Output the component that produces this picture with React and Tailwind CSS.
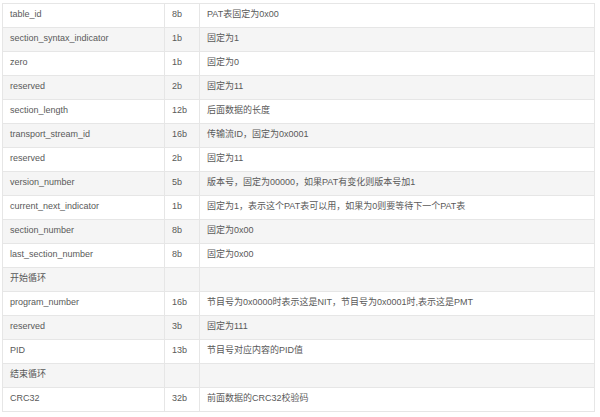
import React from "react";

const rows = [
  ["table_id", "8b", "PAT表固定为0x00"],
  ["section_syntax_indicator", "1b", "固定为1"],
  ["zero", "1b", "固定为0"],
  ["reserved", "2b", "固定为11"],
  ["section_length", "12b", "后面数据的长度"],
  ["transport_stream_id", "16b", "传输流ID，固定为0x0001"],
  ["reserved", "2b", "固定为11"],
  ["version_number", "5b", "版本号，固定为00000，如果PAT有变化则版本号加1"],
  ["current_next_indicator", "1b", "固定为1，表示这个PAT表可以用，如果为0则要等待下一个PAT表"],
  ["section_number", "8b", "固定为0x00"],
  ["last_section_number", "8b", "固定为0x00"],
  ["开始循环", "", ""],
  ["program_number", "16b", "节目号为0x0000时表示这是NIT，节目号为0x0001时,表示这是PMT"],
  ["reserved", "3b", "固定为111"],
  ["PID", "13b", "节目号对应内容的PID值"],
  ["结束循环", "", ""],
  ["CRC32", "32b", "前面数据的CRC32校验码"],
];

export default function App() {
  return (
    <div
      className="w-[600px] h-[417px] bg-white pl-[2px] pt-[3px]"
      style={{ fontFamily: '"Liberation Sans", "Noto Sans CJK SC", sans-serif' }}
    >
      <table className="w-[593px] border-collapse text-[9px] text-[#595959] table-fixed">
        <colgroup>
          <col className="w-[162px]" />
          <col className="w-[35px]" />
          <col />
        </colgroup>
        <tbody>
          {rows.map((r, i) => (
            <tr key={i} className={i % 2 === 1 ? "bg-[#f5f5f5]" : "bg-white"}>
              {r.map((c, j) => (
                <td
                  key={j}
                  className="h-[24px] border-[1.5px] border-[#e6e6e6] px-[7px] pt-0 pb-[1px] whitespace-nowrap"
                >
                  {c}
                </td>
              ))}
            </tr>
          ))}
        </tbody>
      </table>
    </div>
  );
}
